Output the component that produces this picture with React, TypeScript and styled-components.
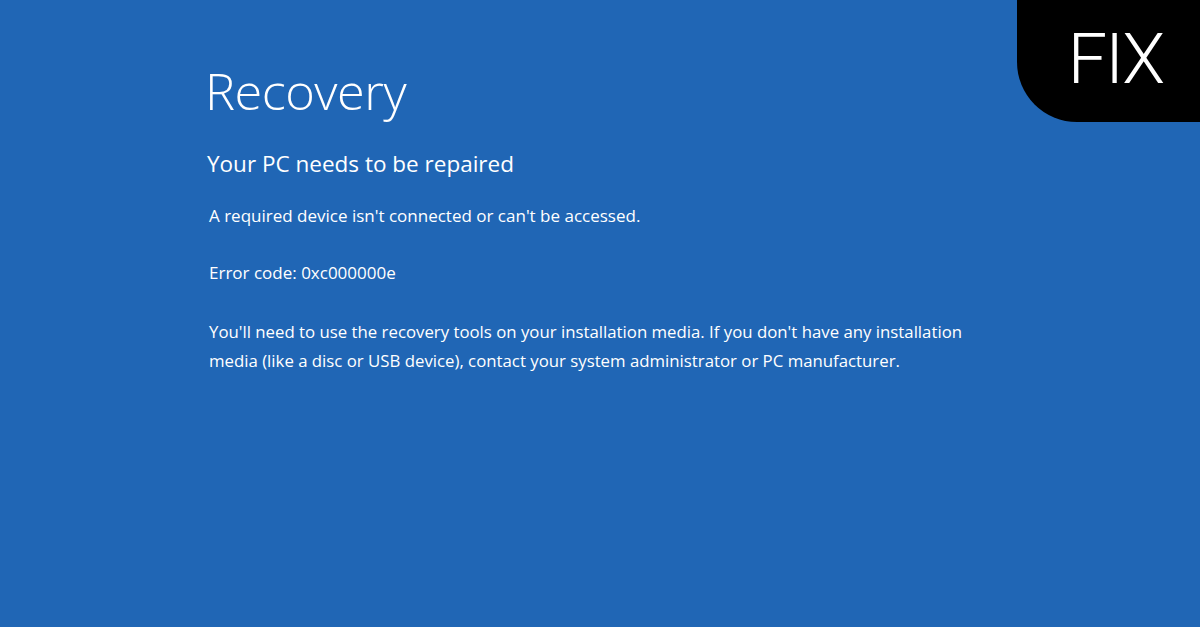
import React from "react";
import styled, { createGlobalStyle } from "styled-components";

const Global = createGlobalStyle`
  html, body { margin: 0; padding: 0; }
  body { background: #2066b5; }
`;

const Screen = styled.div`
  position: relative;
  width: 1200px;
  height: 627px;
  background: #2066b5;
  color: #ffffff;
  font-family: "Open Sans", "Noto Sans", sans-serif;
  overflow: hidden;
  box-sizing: border-box;
  padding: 55px 0 0 205px;
  display: flex;
  flex-direction: column;
`;

const Title = styled.h1`
  margin: 0;
  font-size: 50.5px;
  font-weight: 300;
  line-height: 72px;
  letter-spacing: -0.5px;
`;

const Subtitle = styled.h2`
  margin: 21px 0 0 2px;
  font-size: 22.5px;
  font-weight: 400;
  line-height: 32px;
`;

const Text = styled.p<{ $top: number; $size?: number }>`
  margin: ${(p) => p.$top}px 0 0 4px;
  font-size: ${(p) => p.$size ?? 17}px;
  font-weight: 400;
  line-height: 29px;
  max-width: 765px;
`;

const Badge = styled.div`
  position: absolute;
  top: 0;
  right: 0;
  width: 183px;
  height: 122px;
  background: #000000;
  border-bottom-left-radius: 60px;
  display: flex;
  align-items: center;
  justify-content: center;
  padding-left: 14px;
  padding-bottom: 4px;
  box-sizing: border-box;
  font-family: Roboto, "Liberation Sans", sans-serif;
  font-size: 70px;
  font-weight: 300;
  letter-spacing: -2px;
  color: #ffffff;
`;

export default function App() {
  return (
    <>
      <Global />
      <Screen>
        <Title>Recovery</Title>
        <Subtitle>Your PC needs to be repaired</Subtitle>
        <Text $top={21}>A required device isn't connected or can't be accessed.</Text>
        <Text $top={28}>Error code: 0xc000000e</Text>
        <Text $top={30} $size={16.8}>
          You'll need to use the recovery tools on your installation media. If you don't have any installation
          media (like a disc or USB device), contact your system administrator or PC manufacturer.
        </Text>
      </Screen>
      <Badge>FIX</Badge>
    </>
  );
}
